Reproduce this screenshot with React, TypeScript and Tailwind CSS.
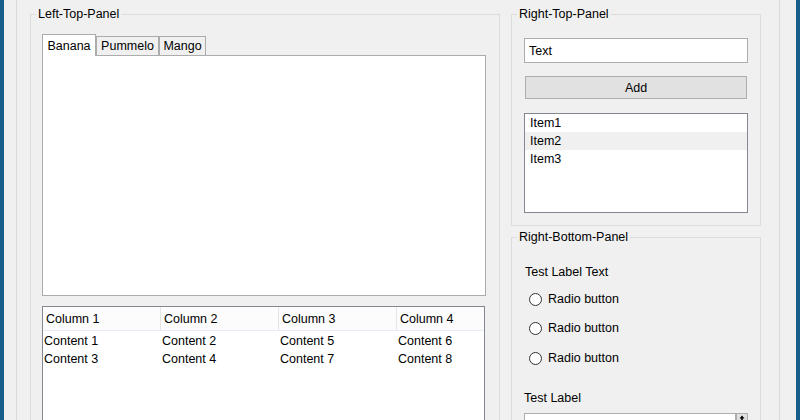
import React from "react";

const tabs = [
  { label: "Banana", w: "w-[54px]" },
  { label: "Pummelo", w: "w-[63px]" },
  { label: "Mango", w: "w-[47px]" },
];

const columns = ["Column 1", "Column 2", "Column 3", "Column 4"];
const rows = [
  ["Content 1", "Content 2", "Content 5", "Content 6"],
  ["Content 3", "Content 4", "Content 7", "Content 8"],
];

function GroupBox({
  title,
  className,
  children,
}: {
  title: string;
  className?: string;
  children?: React.ReactNode;
}) {
  return (
    <div className={`relative border border-[#dcdcdc] ${className ?? ""}`}>
      <span className="absolute -top-[8px] left-[5px] px-[2px] bg-[#f0f0f0] leading-[14px]">
        {title}
      </span>
      {children}
    </div>
  );
}

function Radio({ label, className }: { label: string; className?: string }) {
  return (
    <div className={`flex items-center h-[14px] ${className ?? ""}`}>
      <span className="ml-[5px] w-[13px] h-[13px] rounded-full border border-[#333333] bg-white" />
      <span className="ml-[6px]">{label}</span>
    </div>
  );
}

export default function App() {
  return (
    <div
      className="w-[800px] h-[420px] flex bg-[#f0f0f0] overflow-hidden text-[12.5px] leading-[14px] text-black"
      style={{ fontFamily: '"Liberation Sans", Arial, sans-serif' }}
    >
      <div className="w-[4px] shrink-0 bg-[#175e8b]" />
      <div className="w-[12px] shrink-0" />
      <div className="w-[764px] shrink-0 border-x border-[#d9d9d9] flex items-start pl-[13px]">
        {/* left column */}
        <GroupBox title="Left-Top-Panel" className="mt-[14px] w-[470px] h-[500px] shrink-0 pl-[11px] pt-[19px]">
          <div className="flex items-end h-[21px]">
            {tabs.map((t, i) => (
              <div
                key={t.label}
                className={`${t.w} flex items-center justify-center border border-b-0 border-[#acacac] ${
                  i === 0
                    ? "h-[22px] bg-white -mb-px relative z-10"
                    : "h-[19px] bg-[#f0f0f0]"
                }`}
              >
                {t.label}
              </div>
            ))}
          </div>
          <div className="w-[444px] h-[241px] border border-[#acacac] bg-white" />
          <div className="mt-[10px] w-[443px] h-[200px] border border-[#828790] bg-white overflow-hidden">
            <div className="flex h-[24px] w-[472px] bg-[#fcfcfd] border-b border-[#e5ecf5]">
              {columns.map((c) => (
                <div
                  key={c}
                  className="w-[118px] shrink-0 flex items-center pl-[3px] border-r border-[#e5e5e5]"
                >
                  {c}
                </div>
              ))}
            </div>
            <div className="pt-[1px]">
              {rows.map((r, i) => (
                <div key={i} className="flex h-[18px] items-center">
                  {r.map((c) => (
                    <div key={c} className="w-[118px] shrink-0 pl-[1px]">
                      {c}
                    </div>
                  ))}
                </div>
              ))}
            </div>
          </div>
        </GroupBox>

        {/* right column */}
        <div className="ml-[11px] w-[250px] shrink-0 flex flex-col">
          <GroupBox title="Right-Top-Panel" className="mt-[14px] h-[212px] pl-[12px] pt-[23px]">
            <div className="w-[224px] h-[25px] border border-[#abadb3] bg-white flex items-center pl-[4px]">
              Text
            </div>
            <div className="mt-[13px] ml-[1px] w-[222px] h-[23px] border border-[#adadad] bg-[#e1e1e1] flex items-center justify-center">
              Add
            </div>
            <div className="mt-[14px] w-[224px] h-[100px] border border-[#828790] bg-white">
              <div className="h-[18px] flex items-center pl-[5px]">Item1</div>
              <div className="h-[18px] flex items-center pl-[5px] bg-[#f0f0f0]">Item2</div>
              <div className="h-[18px] flex items-center pl-[5px]">Item3</div>
            </div>
          </GroupBox>
          <GroupBox title="Right-Bottom-Panel" className="mt-[11px] h-[300px] pl-[12px] pt-[27px]">
            <div className="pl-[1px]">Test Label Text</div>
            <Radio label="Radio button" className="mt-[13px]" />
            <Radio label="Radio button" className="mt-[15px]" />
            <Radio label="Radio button" className="mt-[16px]" />
            <div className="mt-[26px]">Test Label</div>
            <div className="mt-[8px] flex">
              <div className="w-[212px] h-[22px] border border-[#abadb3] bg-white" />
              <div className="w-[12px] h-[11px] border border-[#adadad] bg-[#e1e1e1] flex justify-center pt-[1px]">
                <svg width="6" height="6" viewBox="0 0 6 6">
                  <path d="M3 0.5 L5.5 3.5 H3.8 V6 H2.2 V3.5 H0.5 Z" fill="#000" />
                </svg>
              </div>
            </div>
          </GroupBox>
        </div>
      </div>
      <div className="w-[16px] shrink-0" />
      <div className="w-[4px] shrink-0 bg-[#175e8b]" />
    </div>
  );
}
